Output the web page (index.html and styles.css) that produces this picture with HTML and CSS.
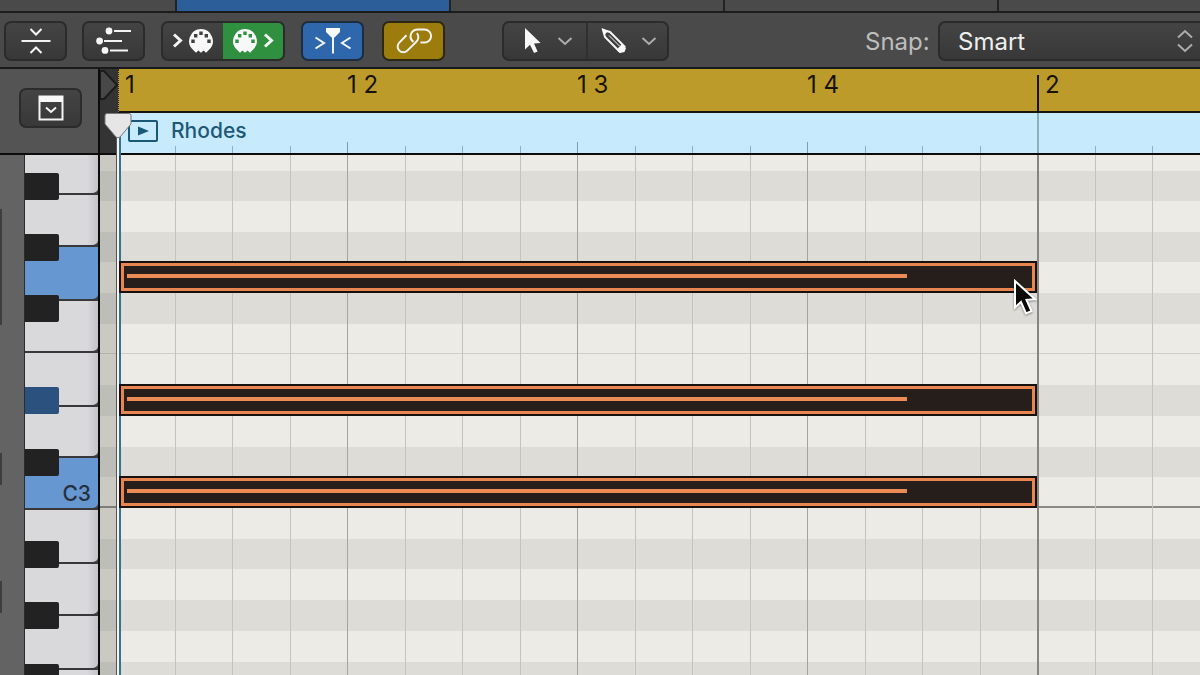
FILE: index.html
```html
<!DOCTYPE html>
<html lang="en">
<head>
    <meta charset="UTF-8">
    <title>Piano Roll</title>
    <link rel="stylesheet" href="styles.css">
</head>
<body>

<div class="tabs">
    <div class="tab tab-first"></div>
    <div class="tab active"></div>
    <div class="tab"></div>
    <div class="tab"></div>
    <div class="tab tab-last"></div>
</div>

<div class="toolbar">
    <button class="tool" aria-label="Collapse">
        <svg width="32" height="28" viewBox="0 0 32 28">
            <path class="stroke" d="M10.5 2 16 7.5 21.5 2M1.5 14h29M10.5 26 16 20.5 21.5 26"/>
        </svg>
    </button>
    <button class="tool tool-list" aria-label="Event list">
        <svg width="36" height="28" viewBox="0 0 36 28">
            <g class="fill"><circle cx="13" cy="4" r="3.4"/><circle cx="3.6" cy="14" r="3.4"/><circle cx="9" cy="23.4" r="3.4"/></g>
            <path class="stroke" d="M18 4h17M8 14h18M14 23.4h18"/>
        </svg>
    </button>

    <div class="group group-midi">
        <button class="seg" aria-label="MIDI in">
            <svg width="42" height="28" viewBox="0 0 42 28">
                <path class="stroke heavy" d="M2 7.500 8.500 13.500 2 19.500"/>
                <path class="fill" fill-rule="evenodd" d="M29 2a12 12 0 0 1 8 20.800l-3 3-2.400-2.300-2.600 2.300-2.600-2.300-2.400 2.300-3-3A12 12 0 0 1 29 2zM27.300 4.500v3.400h3.400V4.500zM22 7.100v3.400h3.400V7.100zM32.600 7.100v3.400H36V7.100zM19.300 12.500v3.400h3.400v-3.400zM35.300 12.500v3.400h3.400v-3.400z"/>
            </svg>
        </button>
        <button class="seg on" aria-label="MIDI out">
            <svg width="42" height="28" viewBox="0 0 42 28">
                <path class="stroke heavy" d="M33 7.500 39.500 13.500 33 19.500"/>
                <path class="fill" fill-rule="evenodd" d="M13 2a12 12 0 0 1 8 20.800l-3 3-2.400-2.300-2.600 2.300-2.600-2.300-2.400 2.300-3-3A12 12 0 0 1 13 2zM11.300 4.500v3.400h3.400V4.500zM6 7.100v3.400h3.400V7.100zM16.600 7.100v3.400H20V7.100zM3.300 12.500v3.400h3.400v-3.400zM19.300 12.500v3.400h3.400v-3.400z"/>
            </svg>
        </button>
    </div>

    <button class="tool tool-catch" aria-label="Catch playhead">
        <svg width="40" height="28" viewBox="0 0 40 28">
            <path class="stroke" d="M2.500 10.500 11 16 2.500 21.500M37.500 10.500 29 16 37.500 21.500M20 8v18.500"/>
            <path class="fill" d="M13 1h14v4l-5.500 5.500h-3L13 5z"/>
        </svg>
    </button>
    <button class="tool tool-link" aria-label="Link">
        <svg width="38" height="28" viewBox="0 0 38 28">
            <g class="stroke">
                <path d="M18.500 14.800a6.400 6.400 0 0 1-3-5.200 7 7 0 0 1 7-7.200h7a6.600 6.600 0 0 1 0 13.200h-4"/>
                <path d="M11.500 8.200 4.300 15.600a5.500 5.500 0 0 0 8 8l9-8.800a6.200 6.200 0 0 0 .6-8.600"/>
            </g>
        </svg>
    </button>

    <div class="group group-tools">
        <button class="seg pick" aria-label="Pointer tool">
            <svg width="18" height="26" viewBox="0 0 18 26">
                <path class="fill" d="M1 0v21.500l5-4.700L10 25l3.600-1.600L10 15.600l6.600-.6z"/>
            </svg>
            <svg class="chev" width="16" height="10" viewBox="0 0 16 10"><path d="M1.500 2 8 8 14.500 2"/></svg>
        </button>
        <button class="seg pick" aria-label="Pencil tool">
            <svg width="28" height="28" viewBox="0 0 28 28">
                <path class="stroke" d="M3 3l7 2L24.500 19.500l-5 5L5 10z"/>
                <path class="fill" d="M2 1l6 3-3.500 4zM19 20l3-3 4 4-1.500 4L20 26l-3-3z"/>
                <path class="stroke thin" d="M9 8.500 19.500 19"/>
            </svg>
            <svg class="chev" width="16" height="10" viewBox="0 0 16 10"><path d="M1.500 2 8 8 14.500 2"/></svg>
        </button>
    </div>

    <div class="snap">
        <label for="snap">Snap:</label>
        <div class="select-wrap">
            <select id="snap">
                <option>Smart</option>
                <option>Bar</option>
                <option>Beat</option>
            </select>
            <svg class="chev" width="18" height="24" viewBox="0 0 18 24"><path d="M2 8.500 9 2l7 6.500M2 15.500 9 22l7-6.500"/></svg>
        </div>
    </div>
</div>

<div class="editor">
    <div class="corner">
        <button class="tool" aria-label="Options">
            <svg width="26" height="26" viewBox="0 0 26 26">
                <path class="stroke" d="M1.500 1.500h23v23h-23z"/>
                <path class="fill" d="M1 1h24v6H1z"/>
                <path class="stroke" d="M8 12.500l5 4.500 5-4.500"/>
            </svg>
        </button>
    </div>

    <div class="timeline">
        <div class="start">
            <svg width="18" height="30" viewBox="0 0 18 30"><path d="M0 1h4l13 14L4 29H0z"/></svg>
        </div>
        <div class="ruler">
            <span class="first">1</span>
            <span>1 2</span>
            <span>1 3</span>
            <span>1 4</span>
            <span class="bar">2</span>
        </div>
        <div class="region">
            <svg width="30" height="22" viewBox="0 0 30 22">
                <rect x="1" y="1" width="28" height="20" rx="1"/>
                <path d="M10 6.500v9l11-4.500z"/>
            </svg>
            <span>Rhodes</span>
        </div>
    </div>

    <div class="side"><i></i><i></i><i></i></div>

    <div class="keyboard">
        <div class="whites">
            <div class="key top"></div>
            <div class="key"></div>
            <div class="key long lit"></div>
            <div class="key"></div>
            <div class="key long"></div>
            <div class="key short"></div>
            <div class="key lit">C3</div>
            <div class="key long"></div>
            <div class="key"></div>
            <div class="key long"></div>
            <div class="key"></div>
        </div>
        <div class="blacks rows">
            <div class="black r2"></div>
            <div class="black r4"></div>
            <div class="black r6"></div>
            <div class="black lit r9"></div>
            <div class="black r11"></div>
            <div class="black r14"></div>
            <div class="black r16"></div>
            <div class="black r18"></div>
        </div>
    </div>

    <div class="roll rows">
        <div class="lane r2"></div>
        <div class="lane r4"></div>
        <div class="lane r6"></div>
        <div class="lane r9"></div>
        <div class="lane r11"></div>
        <div class="lane r14"></div>
        <div class="lane r16"></div>
        <div class="lane r18"></div>
        <div class="line r7"></div>
        <div class="line octave r12"></div>
        <div class="beats"></div>
        <div class="gutter"></div>
        <div class="note r5"></div>
        <div class="note r9"></div>
        <div class="note r12"></div>
    </div>

    <div class="playhead">
        <svg width="28" height="27" viewBox="0 0 28 27">
            <path d="M3 1.500h22q2 0 2 2v8.500L16 25q-2 1.500-4 0L1 12V3.500q0-2 2-2z"/>
        </svg>
    </div>

    <svg class="cursor" width="26" height="38" viewBox="0 0 26 38">
        <path d="M2 2v26.500l6-5.600 5 11.600 5.500-2.400-5-11.300 8.500-.6z"/>
    </svg>
</div>

</body>
</html>
```
FILE: styles.css
```css
:root {
    --beat: 230px;
}
* {
    box-sizing: border-box;
}
body {
    margin: 0;
    height: 100vh;
    overflow: hidden;
    display: flex;
    flex-direction: column;
    background: #4a4a4a;
    font-family: Inter, "Liberation Sans", sans-serif;
    font-size: 24px;
}
svg {
    display: block;
    flex: none;
}
.stroke {
    fill: none;
    stroke: #f4f4f4;
    stroke-width: 2;
}
.thin {
    stroke-width: 1;
}
.heavy {
    stroke-width: 3;
}
.fill {
    fill: #f8f8f8;
}
.chev path {
    fill: none;
    stroke: #acacac;
    stroke-width: 2;
}

/* tabs */
.tabs {
    display: flex;
    flex: none;
    height: 13px;
    border-bottom: 2px solid #1c1c1c;
}
.tab {
    flex: none;
    width: 274px;
    border-right: 2px solid #222;
    background: #4a4a4a;
}
.tab-first {
    width: 177px;
}
.tab-last {
    flex: 1;
    width: auto;
    border-right: 0;
}
.tab.active {
    background: #2c5e9a;
}

/* toolbar */
.toolbar {
    display: flex;
    flex: none;
    align-items: center;
    height: 56px;
    padding: 2px 0 0 4px;
    border-bottom: 2px solid #191919;
    background: #4a4a4a;
}
button {
    margin: 0;
    padding: 0;
    font: inherit;
}
.tool, .group, select {
    border: 2px solid #2b2b2b;
    border-radius: 7px;
    background: linear-gradient(#444, #383838);
}
.tool {
    display: flex;
    flex: none;
    align-items: center;
    justify-content: center;
    width: 63px;
    height: 40px;
}
.tool-list {
    margin-left: 15px;
}
.tool-catch {
    margin-left: 16px;
    border-color: #1d2c3f;
    background: #2e67ab;
}
.tool-link {
    margin-left: 18px;
    border-color: #2d2812;
    background: #9b7c0c;
}
.group {
    display: flex;
    flex: none;
    height: 40px;
    overflow: hidden;
}
.group-midi {
    width: 124px;
    margin-left: 16px;
}
.group-tools {
    width: 167px;
    margin-left: 57px;
}
.seg {
    display: flex;
    flex: none;
    align-items: center;
    justify-content: center;
    width: 50%;
    border: 0;
    background: none;
}
.seg.on {
    background: #2f9140;
}
.pick {
    gap: 15px;
    justify-content: flex-start;
    padding-left: 20px;
}
.pick + .pick {
    gap: 13px;
    padding-left: 12px;
    border-left: 2px solid #303030;
}
.snap {
    display: flex;
    align-items: center;
    width: 335px;
    margin-left: auto;
    color: #bdbdbd;
}
.snap label {
    width: 73px;
}
.select-wrap {
    position: relative;
    flex: 1;
}
select {
    display: block;
    appearance: none;
    width: 100%;
    height: 40px;
    padding: 0 40px 0 18px;
    border-right: 0;
    border-radius: 7px 0 0 7px;
    color: #eee;
    font: inherit;
}
.select-wrap .chev {
    position: absolute;
    top: 8px;
    right: 6px;
    pointer-events: none;
}

/* editor */
.editor {
    position: relative;
    flex: 1;
    min-height: 0;
    display: grid;
    grid-template-columns: 25px 75px 1fr;
    grid-template-rows: 86px 1fr;
    overflow: hidden;
}
.corner {
    grid-column: 1 / 3;
    display: flex;
    justify-content: flex-end;
    align-items: flex-start;
    padding: 19px 16px 0 0;
    border-right: 2px solid #0c0c0c;
    border-bottom: 2px solid #0c0c0c;
    background: #545454;
}
.timeline {
    display: grid;
    grid-template-columns: 18px 1fr;
    grid-template-rows: 44px 40px;
    border-bottom: 2px solid #0c0c0c;
    background: #343434;
}
.start {
    grid-row: 1 / 3;
    padding-top: 1px;
}
.start path {
    fill: #484848;
    stroke: #1c1c1c;
    stroke-width: 2;
}
.ruler {
    display: grid;
    grid-template-columns: repeat(4, var(--beat)) 1fr;
    overflow: hidden;
    border-left: 1px dotted #2b2612;
    border-bottom: 2px solid #17150c;
    background: #bd9b2b;
    color: #17130a;
    line-height: 31px;
}
.ruler span {
    margin-left: -2px;
}
.ruler .first {
    padding-left: 8px;
}
.ruler .bar {
    height: 37px;
    margin-top: 6px;
    padding-left: 6px;
    border-left: 2px solid #17130a;
    line-height: 19px;
}
.region {
    display: flex;
    gap: 13px;
    padding: 7px 0 0 10px;
    background:
        linear-gradient(#8eafba, #8eafba) calc(4 * var(--beat) - 1px) 0 / 2px 100% no-repeat,
        repeating-linear-gradient(90deg, transparent 0 229px, #7fa0ab 229px 230px) 0 100% / 100% 11px no-repeat,
        repeating-linear-gradient(90deg, transparent 0 57px, #8fb0bb 57px 58px, transparent 58px 114px, #8fb0bb 114px 115px) 0 100% / 100% 7px no-repeat,
        #c7ebfd;
    color: #1d5876;
    font-size: 21px;
    font-weight: 500;
    line-height: 22px;
}
.region rect {
    fill: none;
    stroke: #195877;
    stroke-width: 2;
}
.region path {
    fill: #195877;
}

/* keyboard */
.rows {
    display: grid;
    grid-template-rows: 16px 30px 31px 30px 31px 31px 30px 31px 31px 31px 30px 31px 31px 30px 31px 31px 31px 31px;
}
.r2 { grid-row: 2; }
.r4 { grid-row: 4; }
.r5 { grid-row: 5; }
.r6 { grid-row: 6; }
.r7 { grid-row: 7; }
.r9 { grid-row: 9; }
.r11 { grid-row: 11; }
.r12 { grid-row: 12; }
.r14 { grid-row: 14; }
.r16 { grid-row: 16; }
.r18 { grid-row: 18; }
.side {
    display: flex;
    flex-direction: column;
    gap: 96px;
    padding-top: 54px;
    border-right: 1px solid #2c2c2c;
    background: #636363;
}
.side i {
    flex: none;
    width: 2px;
    height: 32px;
    background: #3e3e3e;
}
.side i:first-child {
    height: 116px;
    margin-bottom: 32px;
}
.keyboard {
    display: grid;
    border-right: 2px solid #0c0c0c;
    background: #3c3c3f;
    overflow: hidden;
}
.whites, .blacks {
    grid-area: 1 / 1;
    min-height: 0;
}
.key {
    height: 52px;
    padding: 24px 7px 0 0;
    border-bottom: 2px solid #38383a;
    border-radius: 0 0 6px 0;
    background: linear-gradient(90deg, #d9d9dc 85%, #c4c4c8);
    color: #26303d;
    font-size: 21px;
    font-weight: 500;
    line-height: 24px;
    text-align: right;
}
.key.top {
    height: 40px;
}
.key.long {
    height: 54px;
}
.key.short {
    height: 51px;
}
.key.lit {
    background: #6797d1;
}
.black {
    align-self: center;
    width: 34px;
    height: 27px;
    border-radius: 0 2px 2px 0;
    background: #222;
}
.black.lit {
    background: #2b527f;
}

/* note grid */
.roll {
    grid-template-columns: 18px 1fr;
    overflow: hidden;
    background: #ecebe5;
}
.lane, .line {
    grid-column: 1 / 3;
}
.lane {
    background: #dddcd7;
}
.line {
    border-bottom: 1px solid #cfcfca;
}
.line.octave {
    border-bottom: 2px solid #8a8a87;
}
.beats {
    grid-row: 1 / -1;
    grid-column: 2;
    background:
        linear-gradient(#858583, #858583) calc(4 * var(--beat) - 1px) 0 / 2px 100% no-repeat,
        repeating-linear-gradient(90deg, transparent 0 229px, #a3a3a0 229px 230px),
        repeating-linear-gradient(90deg, transparent 0 57px, #c4c4bf 57px 58px, transparent 58px 114px, #c4c4bf 114px 115px);
}
.gutter {
    grid-row: 1 / -1;
    grid-column: 1;
    background: rgba(70, 70, 60, 0.2);
}
.note {
    grid-column: 2;
    z-index: 1;
    width: calc(4 * var(--beat) - 2px);
    margin: -1px 0 0 1px;
    border: 2px solid #17110e;
    background:
        linear-gradient(#ec8b55, #ec8b55) 6px 11px / 780px 4px no-repeat,
        #251e1b;
    box-shadow: inset 0 0 0 3px #e88550;
}

.playhead {
    position: absolute;
    top: 43px;
    bottom: 0;
    left: 104px;
    width: 28px;
}
.playhead::before {
    content: "";
    position: absolute;
    top: 16px;
    bottom: 0;
    left: 12px;
    width: 5px;
    background: linear-gradient(90deg, #555 1px, #f4f4f4 1px 3px, #39718a 3px);
}
.playhead svg {
    position: relative;
}
.playhead path {
    fill: #e6e6e6;
    stroke: #77797b;
    stroke-width: 1;
}
.cursor {
    position: absolute;
    top: 210px;
    left: 1013px;
    z-index: 2;
    filter: drop-shadow(0 1px 1px rgba(0, 0, 0, 0.4));
}
.cursor path {
    fill: #0a0a0a;
    stroke: #fff;
    stroke-width: 2;
}
```
